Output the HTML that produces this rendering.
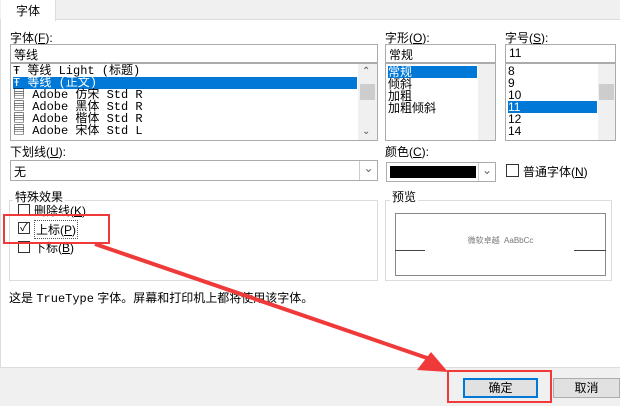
<!DOCTYPE html><html><head><meta charset="utf-8"><style>
*{margin:0;padding:0;box-sizing:border-box}
body{width:620px;height:406px;background:#fff;position:relative;overflow:hidden;font-family:"Liberation Sans","Noto Sans CJK SC",sans-serif;font-size:12px;color:#000}
.a{position:absolute}
.box{position:absolute;border:1px solid #ababab;background:#fff}
.mono{font-family:"Liberation Mono","Noto Sans CJK SC",monospace;font-size:12px}
.row{position:absolute;height:12px;line-height:12px;white-space:nowrap}
.sel{background:#0078d7;color:#fff}
.cb{position:absolute;width:11px;height:11px;border:1px solid #333;background:#fff}
.sb{position:absolute;background:#f0f0f0}
.thumb{position:absolute;background:#cdcdcd}
.grp{position:absolute;border:1px solid #dcdcdc}
</style></head><body>
<div class="a" style="left:0;top:0;width:620px;height:20px;background:#f0f0f0;border-bottom:1px solid #dcdcdc"></div>
<div class="a" style="left:1px;top:0;width:55px;height:21px;background:#fff;border-right:1px solid #dcdcdc;text-align:center;line-height:22px">字体</div>
<div class="a" style="left:0;top:20px;width:1px;height:348px;background:#dcdcdc"></div>

<div class="a" style="left:10px;top:29px">字体(<u>F</u>):</div>
<div class="box" style="left:10px;top:44px;width:368px;height:19px;padding:1px 3px">等线</div>
<div class="box" style="left:10px;top:63px;width:368px;height:78px">
<div class="sb" style="left:347px;top:0;width:19px;height:76px"></div>
<div class="thumb" style="left:349px;top:20px;width:15px;height:16px"></div>
<div class="a" style="left:351px;top:2px;color:#555;font-size:10px">⌃</div>
<div class="a" style="left:351px;top:62px;color:#555;font-size:10px">⌄</div>
<div class="row mono" style="left:2px;top:1px">Ŧ 等线 Light (标题)</div>
<div class="row mono sel" style="left:2px;top:13px;width:344px">Ŧ 等线 (正文)</div>
<div class="row mono" style="left:2px;top:25px">▤ Adobe 仿宋 Std R</div>
<div class="row mono" style="left:2px;top:37px">▤ Adobe 黑体 Std R</div>
<div class="row mono" style="left:2px;top:49px">▤ Adobe 楷体 Std R</div>
<div class="row mono" style="left:2px;top:61px">▤ Adobe 宋体 Std L</div>
</div>

<div class="a" style="left:385px;top:29px">字形(<u>O</u>):</div>
<div class="box" style="left:385px;top:44px;width:111px;height:19px;padding:1px 3px">常规</div>
<div class="box" style="left:385px;top:63px;width:111px;height:78px">
<div class="sb" style="left:92px;top:0;width:17px;height:76px"></div>
<div class="row sel" style="left:2px;top:2px;width:89px">常规</div>
<div class="row" style="left:2px;top:14px">倾斜</div>
<div class="row" style="left:2px;top:26px">加粗</div>
<div class="row" style="left:2px;top:38px">加粗倾斜</div>
</div>

<div class="a" style="left:505px;top:29px">字号(<u>S</u>):</div>
<div class="box" style="left:505px;top:44px;width:111px;height:19px;padding:1px 3px">11</div>
<div class="box" style="left:505px;top:63px;width:111px;height:78px">
<div class="sb" style="left:92px;top:0;width:17px;height:76px"></div>
<div class="thumb" style="left:93px;top:20px;width:15px;height:16px"></div>
<div class="row" style="left:2px;top:1px">8</div>
<div class="row" style="left:2px;top:13px">9</div>
<div class="row" style="left:2px;top:25px">10</div>
<div class="row sel" style="left:2px;top:37px;width:89px">11</div>
<div class="row" style="left:2px;top:49px">12</div>
<div class="row" style="left:2px;top:61px">14</div>
</div>

<div class="a" style="left:10px;top:143px">下划线(<u>U</u>):</div>
<div class="box" style="left:10px;top:160px;width:368px;height:21px;padding:2px 3px">无
<div class="a" style="left:348px;top:0;width:18px;height:19px;border-left:1px solid #ccc;text-align:center;color:#666">⌄</div></div>

<div class="a" style="left:385px;top:143px">颜色(<u>C</u>):</div>
<div class="box" style="left:386px;top:162px;width:110px;height:20px">
<div class="a" style="left:3px;top:3px;width:86px;height:12px;background:#000"></div>
<div class="a" style="left:91px;top:0;width:17px;height:18px;border-left:1px solid #ccc;text-align:center;color:#666">⌄</div></div>
<div class="cb" style="left:506px;top:164px;width:13px;height:13px"></div>
<div class="a" style="left:523px;top:163px">普通字体(<u>N</u>)</div>

<div class="grp" style="left:9px;top:200px;width:369px;height:81px"></div>
<div class="a" style="left:13px;top:188px;background:#fff;padding:0 2px">特殊效果</div>
<div class="cb" style="left:18px;top:204px;width:12px;height:12px"></div>
<div class="a" style="left:34px;top:202px">删除线(<u>K</u>)</div>
<div class="cb" style="left:18px;top:222px;width:12px;height:12px;font-size:11px;line-height:10px;text-align:center">✓</div>
<div class="a" style="left:34px;top:220px;border:1px dotted #555;padding:0 1px">上标(<u>P</u>)</div>
<div class="cb" style="left:18px;top:241px;width:12px;height:12px"></div>
<div class="a" style="left:34px;top:239px">下标(<u>B</u>)</div>

<div class="grp" style="left:385px;top:200px;width:227px;height:81px"></div>
<div class="a" style="left:390px;top:188px;background:#fff;padding:0 2px">预览</div>
<div class="a" style="left:395px;top:213px;width:211px;height:63px;border:1px solid #888"></div>
<div class="a" style="left:395px;top:235px;width:211px;text-align:center;color:#777;font-size:8px">微软卓越 &nbsp;AaBbCc</div>
<div class="a" style="left:395px;top:250px;width:30px;height:1px;background:#444"></div>
<div class="a" style="left:574px;top:250px;width:32px;height:1px;background:#444"></div>

<div class="a" style="left:9px;top:289px">这是 <span class="mono">TrueType</span> 字体。屏幕和打印机上都将使用该字体。</div>

<div class="a" style="left:0;top:367px;width:620px;height:39px;background:#f0f0f0;border-top:1px solid #dcdcdc"></div>
<div class="a" style="left:463px;top:378px;width:75px;height:20px;background:#e1e1e1;border:2px solid #0078d7;text-align:center;line-height:16px">确定</div>
<div class="a" style="left:553px;top:378px;width:67px;height:20px;background:#e1e1e1;border:1px solid #adadad;text-align:center;line-height:18px">取消</div>

<div class="a" style="left:3px;top:214px;width:107px;height:30px;border:2px solid #f03a3a"></div>
<div class="a" style="left:447px;top:370px;width:105px;height:33px;border:2px solid #f03a3a"></div>
<svg class="a" style="left:0;top:0" width="620" height="406">
<line x1="95" y1="244" x2="430" y2="359" stroke="#f03a3a" stroke-width="4"/>
<polygon points="448,372 417,370 431,352" fill="#f03a3a"/>
</svg>
</body></html>
